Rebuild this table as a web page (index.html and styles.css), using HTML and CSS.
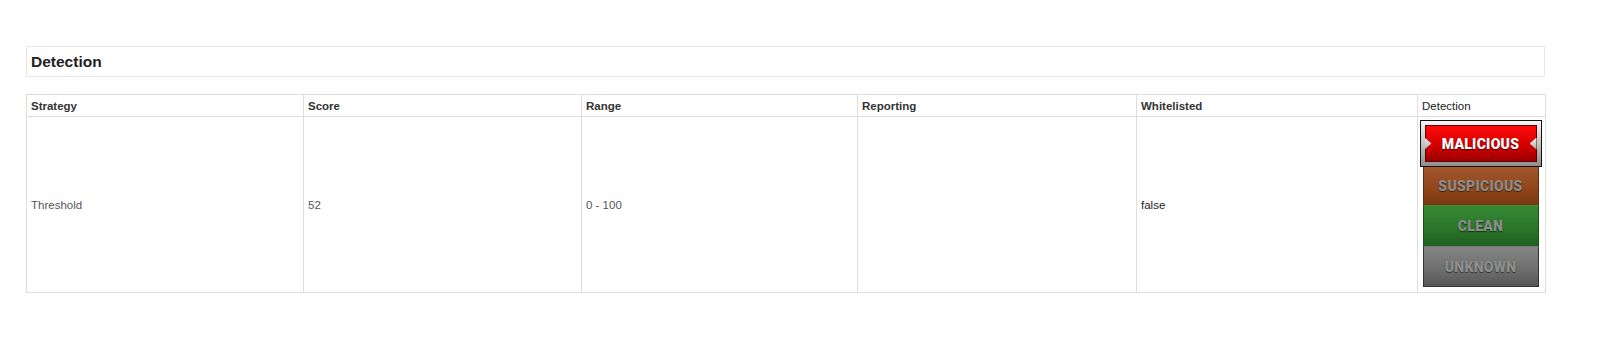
FILE: index.html
```html
<!DOCTYPE html>
<html>
<head>
<meta charset="utf-8">
<link rel="stylesheet" href="styles.css">
</head>
<body>
<div class="page">
  <div class="panel-title">Detection</div>
  <table class="grid">
    <colgroup>
      <col class="c1"><col class="c2"><col class="c3"><col class="c4"><col class="c5"><col class="c6">
    </colgroup>
    <thead>
      <tr>
        <th>Strategy</th>
        <th>Score</th>
        <th>Range</th>
        <th>Reporting</th>
        <th>Whitelisted</th>
        <th class="light">Detection</th>
      </tr>
    </thead>
    <tbody>
      <tr>
        <td>Threshold</td>
        <td>52</td>
        <td>0 - 100</td>
        <td></td>
        <td class="dark">false</td>
        <td class="det-cell">
          <div class="meter">
            <div class="lvl malicious"><span class="face">MALICIOUS</span></div>
            <div class="lvl suspicious">SUSPICIOUS</div>
            <div class="lvl clean">CLEAN</div>
            <div class="lvl unknown">UNKNOWN</div>
          </div>
        </td>
      </tr>
    </tbody>
  </table>
</div>
</body>
</html>
```

FILE: styles.css
```css
html, body {
  margin: 0;
  padding: 0;
  background: #fff;
}
body {
  font-family: "Liberation Sans", Arial, sans-serif;
  color: #333;
}
.page {
  padding: 46px 55px 0 26px;
}
.panel-title {
  box-sizing: border-box;
  height: 31px;
  border: 1px solid #e6e6e6;
  padding: 0 4px;
  font-size: 15.5px;
  font-weight: bold;
  line-height: 29px;
  color: #222;
}
.grid {
  margin-top: 17px;
  width: 1519px;
  border-collapse: collapse;
  table-layout: fixed;
  font-size: 11.5px;
}
.c1 { width: 277px; }
.c2 { width: 278px; }
.c3 { width: 276px; }
.c4 { width: 279px; }
.c5 { width: 281px; }
.c6 { width: 128px; }
.grid th, .grid td {
  border: 1px solid #dedede;
  padding: 0 4px;
  text-align: left;
}
.grid th {
  height: 21px;
  font-weight: bold;
  color: #333;
}
.grid th.light {
  font-weight: normal;
  color: #222;
}
.grid td {
  color: #555;
  vertical-align: middle;
}
.grid td.dark {
  color: #222;
}
.grid td.det-cell {
  padding: 3px 2px 5px 0;
  vertical-align: top;
}
.meter {
  display: flex;
  flex-direction: column;
  align-items: center;
}
.lvl {
  box-sizing: border-box;
  width: 116px;
  height: 40px;
  display: flex;
  align-items: center;
  justify-content: center;
  font-family: Roboto, "DejaVu Sans", sans-serif;
  font-weight: 900;
  font-size: 14px;
  letter-spacing: 0.3px;
  color: #8c8c8c;
  text-shadow: 0 1px 1px rgba(0,0,0,0.55);
}
.malicious {
  position: relative;
  width: 122px;
  height: 47px;
  padding: 4px;
  border: 1px solid #111;
  background: linear-gradient(#f4f4f4, #c4c4c4 50%, #8e8e8e);
  z-index: 1;
}
.malicious .face {
  box-sizing: border-box;
  width: 100%;
  height: 100%;
  display: flex;
  align-items: center;
  justify-content: center;
  border: 1px solid #5a0000;
  background: linear-gradient(#ff0a0a, #d80000 50%, #9c0000);
  color: #fff;
  font-size: 14px;
  text-shadow: 0 1px 1px rgba(0,0,0,0.6);
}
.malicious::before, .malicious::after {
  content: "";
  position: absolute;
  top: 50%;
  width: 7px;
  height: 12px;
  margin-top: -6px;
  background: linear-gradient(#f0f0f0, #a8a8a8);
}
.malicious::before {
  left: 4px;
  clip-path: polygon(0 0, 100% 50%, 0 100%);
}
.malicious::after {
  right: 4px;
  clip-path: polygon(100% 0, 0 50%, 100% 100%);
}
.suspicious {
  height: 38px;
  border-left: 1px solid #5e2a0c;
  border-right: 1px solid #5e2a0c;
  background: linear-gradient(#a3582c, #8e4519 60%, #7a3710);
}
.clean {
  height: 41px;
  border-left: 1px solid #1b4d1b;
  border-right: 1px solid #1b4d1b;
  border-top: 1px solid #3a8a3a;
  background: linear-gradient(#358a35, #2a742a 60%, #1f5e1f);
}
.unknown {
  height: 41px;
  border: 1px solid #333;
  border-top: 1px solid #777;
  background: linear-gradient(#858585, #6d6d6d 60%, #565656);
  color: #8e8e8e;
}
```
